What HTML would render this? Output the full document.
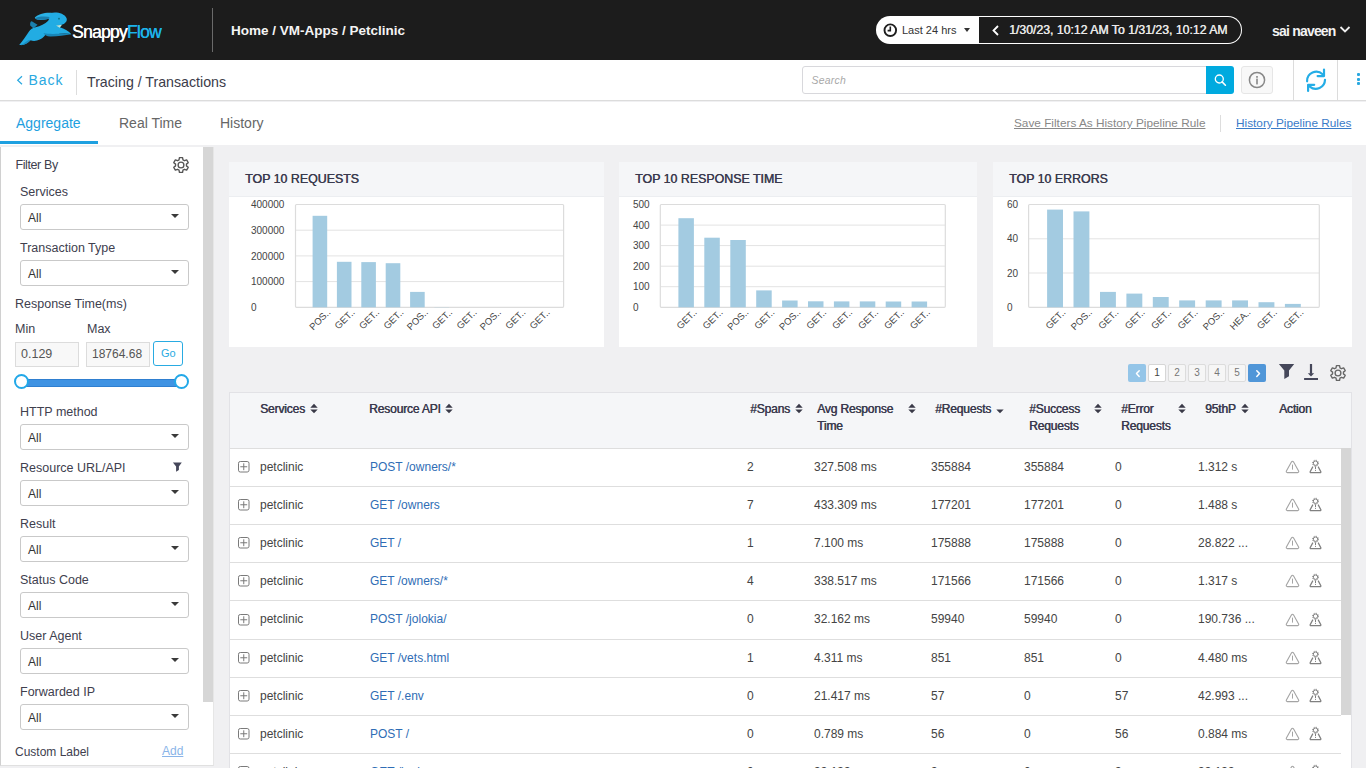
<!DOCTYPE html>
<html><head><meta charset="utf-8">
<style>
*{box-sizing:border-box;margin:0;padding:0}
html,body{width:1366px;height:768px;overflow:hidden;background:#f0f0f2;font-family:"Liberation Sans",sans-serif;color:#333}
.a{position:absolute;white-space:nowrap}
#hdr{position:absolute;left:0;top:0;width:1366px;height:60px;background:#1c1c1c}
#bar2{position:absolute;left:0;top:60px;width:1366px;height:41px;background:#fff;border-bottom:1px solid #dcdcdc}
#tabs{position:absolute;left:0;top:102px;width:1366px;height:43px;background:#fff}
.sel{position:absolute;left:20px;width:169px;height:26px;border:1px solid #c9c9c9;border-radius:3px;background:#fff}
.sel span{position:absolute;left:7px;top:6px;font-size:12px;color:#333}
.sel i{position:absolute;right:9.5px;top:8.8px;width:0;height:0;border-left:4.8px solid transparent;border-right:4.8px solid transparent;border-top:4.8px solid #3a3a3a}
.lbl{position:absolute;left:20px;font-size:12.5px;color:#40404e}
.panel{position:absolute;top:162px;height:185px;background:#fff}
.ph{position:absolute;left:0;top:0;right:0;height:35px;background:#f5f6f8;border-bottom:1px solid #eceef1}
.ph b{position:absolute;left:16px;top:9.8px;font-size:12.4px;color:#3a3a4e;font-weight:normal;text-shadow:0.4px 0 0 #3a3a4e;letter-spacing:0}
.th{font-size:12.1px;font-weight:normal;color:#3a3a4e;text-shadow:0.45px 0 0 #3a3a4e;line-height:16.9px;letter-spacing:-0.2px}
.td{font-size:12px;color:#444;line-height:14px}
</style></head><body>

<!-- HEADER -->
<div id="hdr">
  <svg class="a" style="left:15px;top:8px" width="60" height="40" viewBox="0 0 60 40">
    <path d="M15.2 17.5 C14.8 15 15.5 13.3 16.8 13.2 L22.5 16.8 L18.5 20.5 Z" fill="#1a7fae"/>
    <path d="M19.8 9.6 C23 6 30 4.3 36.5 4.8 L38.5 9 C33 11.5 26 12.6 22 11.6 C20.5 11.1 19.8 10.4 19.8 9.6 Z" fill="#2ab2e6"/>
    <path d="M20.6 9.9 C24 8.3 31 8 36.8 9.4 C33 11.3 27 12.3 23 11.7 C21.6 11.3 20.9 10.7 20.6 9.9 Z" fill="#1a7fae"/>
    <path d="M35 5.2 C41 3.6 49 5 51.6 10.2 C52.6 13.2 50 15.8 46 17 L42 17.6 L45.5 19.6 C50 21 53.5 23 56.4 26.2 C52 25.3 46 25.5 40 26.4 L30.5 26.8 C28.8 29.3 26 31.6 22 32.6 C19.5 33.2 17 33 15.6 32.2 C12.5 35 8.5 37.6 4.2 37 C7.5 33.5 10.5 28.5 14 23.5 C15.5 21.2 17.5 20 20.5 19.3 C25.5 18 30 16.2 33.2 12.8 C34.4 10.8 34.6 7.5 35 5.2 Z" fill="#22ace3"/>
    <path d="M28.5 25 C34 26.6 44 25.6 52 25.6 C54 25.7 55.6 25.9 56.4 26.2 C50 27.3 43 28.1 36 28.4 C32 28.6 29.8 27.6 28.5 25 Z" fill="#1886b8"/>
    <path d="M8 36 C11 34 13.5 31.5 15.6 32.2 C13 35 10 37 6 37.3 Z" fill="#1a8cc0"/>
    <path d="M41.2 17.4 L47 16.7 C46.2 18 45.3 19 44.6 19.8 Z" fill="#b8e8e0"/>
    <circle cx="44" cy="10.7" r="0.9" fill="#0d6e80"/>
  </svg>
  <div class="a" style="left:72px;top:22px;font-size:17.5px;color:#fff;letter-spacing:-0.75px;text-shadow:0.3px 0 0 currentColor">Snappy<span style="color:#1cb4ea">Flow</span></div>
  <div class="a" style="left:212px;top:8px;width:1px;height:44px;background:#6a6a6a"></div>
  <!-- time picker -->
  <div class="a" style="left:876px;top:16px;width:366px;height:28px;border-radius:14px;background:#fff"></div>
  <div class="a" style="left:979px;top:17px;width:262px;height:26px;border-radius:0 13px 13px 0;background:#1c1c1c"></div>
  <svg class="a" style="left:883px;top:23px" width="15" height="15" viewBox="0 0 15 15"><circle cx="7.3" cy="7.2" r="5.8" fill="none" stroke="#1e1e1e" stroke-width="1.9"/><path d="M7.3 3.6 V7.6 H4.6" fill="none" stroke="#1e1e1e" stroke-width="1.6"/></svg>
  <div class="a" style="left:902px;top:24px;font-size:11px;color:#333">Last 24 hrs</div>
  <div class="a" style="left:963.5px;top:28px;width:0;height:0;border-left:3.5px solid transparent;border-right:3.5px solid transparent;border-top:4px solid #333"></div>
  <svg class="a" style="left:990px;top:24px" width="12" height="13" viewBox="0 0 12 13"><path d="M8 2 L3.5 6.5 L8 11" fill="none" stroke="#fff" stroke-width="1.8"/></svg>
  <div class="a" style="left:1009px;top:23px;font-size:12.25px;color:#e8e8e8;text-shadow:0.4px 0 0 #e8e8e8">1/30/23, 10:12 AM To 1/31/23, 10:12 AM</div>
  <div class="a" style="left:1272px;top:23px;font-size:14px;font-weight:bold;color:#f2f2f2;letter-spacing:-0.8px">sai naveen</div>
  <svg class="a" style="left:1339px;top:25px" width="12" height="9" viewBox="0 0 12 9"><path d="M1.5 2 L6 6.5 L10.5 2" fill="none" stroke="#eee" stroke-width="1.8"/></svg>
  <div class="a" style="left:231px;top:22.5px;font-size:13.5px;font-weight:bold;color:#f4f4f4;letter-spacing:0px">Home / VM-Apps / Petclinic</div>
</div>

<!-- BAR 2 -->
<div id="bar2">
  <svg class="a" style="left:16px;top:15px" width="8" height="11" viewBox="0 0 8 11"><path d="M6 1.3 L1.7 5.3 L6 9.3" fill="none" stroke="#29a8e0" stroke-width="1.2"/></svg>
  <div class="a" style="left:28.5px;top:12px;font-size:14px;color:#29a8e0;letter-spacing:1px">Back</div>
  <div class="a" style="left:76px;top:10px;width:1px;height:25px;background:#ddd"></div>
  <div class="a" style="left:87px;top:14px;font-size:14.2px;color:#3c3c4a">Tracing / Transactions</div>
  <div class="a" style="left:802px;top:6px;width:405px;height:28px;border:1px solid #d8d8dc;border-radius:3px 0 0 3px;background:#fff"></div>
  <div class="a" style="left:811.5px;top:15.2px;font-size:10.4px;font-style:italic;color:#a8a8a8;letter-spacing:0.25px">Search</div>
  <div class="a" style="left:1206px;top:6px;width:28px;height:28px;background:#00aadf;border-radius:0 3px 3px 0"></div>
  <svg class="a" style="left:1212px;top:12px" width="16" height="16" viewBox="0 0 16 16"><circle cx="7.3" cy="7" r="4" fill="none" stroke="#fff" stroke-width="1.3"/><path d="M10.1 9.9 L13.4 13.2" stroke="#fff" stroke-width="1.6" stroke-linecap="round"/></svg>
  <div class="a" style="left:1241px;top:6px;width:32px;height:28px;background:#f8f8f8;border:1px solid #e6e6e6;border-radius:3px"></div>
  <svg class="a" style="left:1248px;top:11px" width="18" height="18" viewBox="0 0 18 18"><circle cx="9" cy="9" r="7.6" fill="none" stroke="#888" stroke-width="1.5"/><rect x="8.2" y="5" width="1.6" height="1.8" fill="#888"/><rect x="8.2" y="7.6" width="1.6" height="5.8" fill="#888"/></svg>
  <div class="a" style="left:1293px;top:0;width:1px;height:41px;background:#dcdcdc"></div>
  <svg class="a" style="left:1304px;top:8px" width="24" height="26" viewBox="0 0 24 26"><g fill="none" stroke="#24ade6" stroke-width="2.2" stroke-linecap="round" stroke-linejoin="round"><path d="M3.1 13.3 A9.2 9.2 0 0 1 18.6 6.3"/><path d="M20 1.6 V8.1 H13.6"/><path d="M21 11.8 A9.2 9.2 0 0 1 5.8 18.6"/><path d="M4.1 23 V16.8 H10.2"/></g></svg>
  <div class="a" style="left:1337px;top:0;width:1px;height:41px;background:#dcdcdc"></div>
  <div class="a" style="left:1357px;top:13px;width:3px;height:3px;background:#29a8e0;border-radius:1px"></div>
  <div class="a" style="left:1357px;top:17.5px;width:3px;height:3px;background:#29a8e0;border-radius:1px"></div>
  <div class="a" style="left:1357px;top:22px;width:3px;height:3px;background:#29a8e0;border-radius:1px"></div>
</div>

<!-- TABS -->
<div id="tabs">
  <div class="a" style="left:16px;top:13px;font-size:14px;color:#1ea0e0">Aggregate</div>
  <div class="a" style="left:0;top:39px;width:98px;height:3px;background:#1ea0e0"></div>
  <div class="a" style="left:119px;top:13px;font-size:14px;color:#666">Real Time</div>
  <div class="a" style="left:220px;top:13px;font-size:14px;color:#666">History</div>
  <div class="a" style="left:1014px;top:14px;font-size:11.8px;color:#888;text-decoration:underline">Save Filters As History Pipeline Rule</div>
  <div class="a" style="left:1220px;top:13px;width:1px;height:17px;background:#ddd"></div>
  <div class="a" style="left:1236px;top:14px;font-size:11.8px;color:#3a7bc8;text-decoration:underline">History Pipeline Rules</div>
</div>

<!-- SIDEBAR -->
<div class="a" style="left:0;top:147px;width:214px;height:619px;background:#fff;border-left:1px solid #d0d0d0;border-bottom:1px solid #e0e0e0;border-right:1px solid #e6e6e6"></div>
<div class="a" style="left:203px;top:147px;width:10px;height:555px;background:#d6d6d6"></div>
<div class="a" style="left:15.5px;top:158px;font-size:12.5px;letter-spacing:-0.4px;color:#40404e">Filter By</div>
<svg class="a" style="left:172px;top:156px" width="18" height="18" viewBox="0 0 18 18"><path fill="none" stroke="#555" stroke-width="1.35" stroke-linejoin="round" d="M10.97 3.87 L10.58 1.57 L7.42 1.57 L7.03 3.87 L5.54 4.73 L3.35 3.91 L1.77 6.65 L3.57 8.14 L3.57 9.86 L1.77 11.35 L3.35 14.09 L5.54 13.27 L7.03 14.13 L7.42 16.43 L10.58 16.43 L10.97 14.13 L12.46 13.27 L14.65 14.09 L16.23 11.35 L14.43 9.86 L14.43 8.14 L16.23 6.65 L14.65 3.91 L12.46 4.73 Z"/><circle cx="9" cy="9" r="2.9" fill="none" stroke="#555" stroke-width="1.35"/></svg>

<div class="lbl" style="top:185px">Services</div>
<div class="sel" style="top:204px"><span>All</span><i></i></div>
<div class="lbl" style="top:241px">Transaction Type</div>
<div class="sel" style="top:260px"><span>All</span><i></i></div>
<div class="lbl" style="top:297px;left:15px">Response Time(ms)</div>
<div class="lbl" style="top:322px;left:15px">Min</div>
<div class="lbl" style="top:322px;left:87px">Max</div>
<div class="a" style="left:15px;top:342px;width:64px;height:25px;background:#f8f8f8;border:1px solid #dcdcdc"></div>
<div class="a" style="left:21px;top:347px;font-size:12.5px;color:#555">0.129</div>
<div class="a" style="left:86px;top:342px;width:64px;height:25px;background:#f8f8f8;border:1px solid #dcdcdc"></div>
<div class="a" style="left:92px;top:346.8px;font-size:12px;color:#555">18764.68</div>
<div class="a" style="left:153px;top:341px;width:30px;height:25px;background:#fff;border:1px solid #29abe2;border-radius:3px"></div>
<div class="a" style="left:161px;top:347px;font-size:11px;color:#29abe2">Go</div>
<div class="a" style="left:21px;top:379px;width:160px;height:8px;background:#3f93e3;border-top:1px solid #2f7fd0;border-bottom:1px solid #2f7fd0"></div>
<div class="a" style="left:14px;top:374px;width:15px;height:15px;border-radius:50%;background:#fff;border:2.3px solid #22a8e8"></div>
<div class="a" style="left:174px;top:374px;width:15px;height:15px;border-radius:50%;background:#fff;border:2.3px solid #22a8e8"></div>

<div class="lbl" style="top:405px">HTTP method</div>
<div class="sel" style="top:424px"><span>All</span><i></i></div>
<div class="lbl" style="top:461px">Resource URL/API</div>
<svg class="a" style="left:172px;top:462px" width="11" height="11" viewBox="0 0 11 11"><path d="M0.9 0.4 H9.8 L6.9 4.4 V7.9 L4.1 9.8 V4.4 Z" fill="#45475a"/></svg>
<div class="sel" style="top:480px"><span>All</span><i></i></div>
<div class="lbl" style="top:517px">Result</div>
<div class="sel" style="top:536px"><span>All</span><i></i></div>
<div class="lbl" style="top:573px">Status Code</div>
<div class="sel" style="top:592px"><span>All</span><i></i></div>
<div class="lbl" style="top:629px">User Agent</div>
<div class="sel" style="top:648px"><span>All</span><i></i></div>
<div class="lbl" style="top:685px">Forwarded IP</div>
<div class="sel" style="top:704px"><span>All</span><i></i></div>
<div class="lbl" style="top:744.5px;left:15px;font-size:12px">Custom Label</div>
<div class="a" style="left:162px;top:744px;font-size:12px;color:#8ab4e8;text-decoration:underline">Add</div>

<!-- CHARTS -->
<div class="panel" style="left:229px;width:375px"><div class="ph"><b>TOP 10 REQUESTS</b></div></div>
<div class="panel" style="left:619px;width:358px"><div class="ph"><b>TOP 10 RESPONSE TIME</b></div></div>
<div class="panel" style="left:993px;width:359px"><div class="ph"><b>TOP 10 ERRORS</b></div></div>
<svg class="a" style="left:0;top:0" width="1366" height="360" viewBox="0 0 1366 360">
<text x="251" y="208.1" font-size="10" fill="#444">400000</text>
<line x1="295.5" y1="230.2" x2="563.6" y2="230.2" stroke="#e3e3e3" stroke-width="1"/>
<text x="251" y="233.8" font-size="10" fill="#444">300000</text>
<line x1="295.5" y1="255.9" x2="563.6" y2="255.9" stroke="#e3e3e3" stroke-width="1"/>
<text x="251" y="259.5" font-size="10" fill="#444">200000</text>
<line x1="295.5" y1="281.6" x2="563.6" y2="281.6" stroke="#e3e3e3" stroke-width="1"/>
<text x="251" y="285.2" font-size="10" fill="#444">100000</text>
<text x="251" y="310.9" font-size="10" fill="#444">0</text>
<rect x="295.5" y="204.5" width="268.1" height="102.80000000000001" fill="none" stroke="#dcdcdc" stroke-width="1.2" rx="1"/>
<rect x="312.6" y="215.8" width="14.6" height="91.5" fill="#a3cbe1"/>
<text x="331.1" y="312.9" font-size="9.5" fill="#444" text-anchor="end" transform="rotate(-45 331.1 312.9)">POS..</text>
<rect x="336.9" y="261.8" width="14.6" height="45.5" fill="#a3cbe1"/>
<text x="355.4" y="312.9" font-size="9.5" fill="#444" text-anchor="end" transform="rotate(-45 355.4 312.9)">GET..</text>
<rect x="361.3" y="262.1" width="14.6" height="45.2" fill="#a3cbe1"/>
<text x="379.8" y="312.9" font-size="9.5" fill="#444" text-anchor="end" transform="rotate(-45 379.8 312.9)">GET..</text>
<rect x="385.7" y="263.2" width="14.6" height="44.1" fill="#a3cbe1"/>
<text x="404.2" y="312.9" font-size="9.5" fill="#444" text-anchor="end" transform="rotate(-45 404.2 312.9)">GET..</text>
<rect x="410.1" y="291.9" width="14.6" height="15.4" fill="#a3cbe1"/>
<text x="428.6" y="312.9" font-size="9.5" fill="#444" text-anchor="end" transform="rotate(-45 428.6 312.9)">POS..</text>
<rect x="434.4" y="307.1" width="14.6" height="0.2" fill="#a3cbe1"/>
<text x="452.9" y="312.9" font-size="9.5" fill="#444" text-anchor="end" transform="rotate(-45 452.9 312.9)">GET..</text>
<rect x="458.8" y="307.3" width="14.6" height="0.0" fill="#a3cbe1"/>
<text x="477.3" y="312.9" font-size="9.5" fill="#444" text-anchor="end" transform="rotate(-45 477.3 312.9)">GET..</text>
<rect x="483.2" y="307.3" width="14.6" height="0.0" fill="#a3cbe1"/>
<text x="501.7" y="312.9" font-size="9.5" fill="#444" text-anchor="end" transform="rotate(-45 501.7 312.9)">POS..</text>
<rect x="507.5" y="307.3" width="14.6" height="0.0" fill="#a3cbe1"/>
<text x="526.1" y="312.9" font-size="9.5" fill="#444" text-anchor="end" transform="rotate(-45 526.1 312.9)">GET..</text>
<rect x="531.9" y="307.3" width="14.6" height="0.0" fill="#a3cbe1"/>
<text x="550.4" y="312.9" font-size="9.5" fill="#444" text-anchor="end" transform="rotate(-45 550.4 312.9)">GET..</text>

<text x="633" y="208.1" font-size="10" fill="#444">500</text>
<line x1="660.3" y1="225.1" x2="945.3" y2="225.1" stroke="#e3e3e3" stroke-width="1"/>
<text x="633" y="228.7" font-size="10" fill="#444">400</text>
<line x1="660.3" y1="245.6" x2="945.3" y2="245.6" stroke="#e3e3e3" stroke-width="1"/>
<text x="633" y="249.2" font-size="10" fill="#444">300</text>
<line x1="660.3" y1="266.2" x2="945.3" y2="266.2" stroke="#e3e3e3" stroke-width="1"/>
<text x="633" y="269.8" font-size="10" fill="#444">200</text>
<line x1="660.3" y1="286.7" x2="945.3" y2="286.7" stroke="#e3e3e3" stroke-width="1"/>
<text x="633" y="290.3" font-size="10" fill="#444">100</text>
<text x="633" y="310.9" font-size="10" fill="#444">0</text>
<rect x="660.3" y="204.5" width="285.0" height="102.80000000000001" fill="none" stroke="#dcdcdc" stroke-width="1.2" rx="1"/>
<rect x="678.4" y="218.2" width="15.5" height="89.1" fill="#a3cbe1"/>
<text x="697.4" y="312.9" font-size="9.5" fill="#444" text-anchor="end" transform="rotate(-45 697.4 312.9)">GET..</text>
<rect x="704.3" y="237.7" width="15.5" height="69.6" fill="#a3cbe1"/>
<text x="723.3" y="312.9" font-size="9.5" fill="#444" text-anchor="end" transform="rotate(-45 723.3 312.9)">GET..</text>
<rect x="730.3" y="240.0" width="15.5" height="67.3" fill="#a3cbe1"/>
<text x="749.2" y="312.9" font-size="9.5" fill="#444" text-anchor="end" transform="rotate(-45 749.2 312.9)">POS..</text>
<rect x="756.2" y="290.4" width="15.5" height="16.9" fill="#a3cbe1"/>
<text x="775.1" y="312.9" font-size="9.5" fill="#444" text-anchor="end" transform="rotate(-45 775.1 312.9)">GET..</text>
<rect x="782.1" y="300.5" width="15.5" height="6.8" fill="#a3cbe1"/>
<text x="801.0" y="312.9" font-size="9.5" fill="#444" text-anchor="end" transform="rotate(-45 801.0 312.9)">POS..</text>
<rect x="808.0" y="301.3" width="15.5" height="6.0" fill="#a3cbe1"/>
<text x="827.0" y="312.9" font-size="9.5" fill="#444" text-anchor="end" transform="rotate(-45 827.0 312.9)">GET..</text>
<rect x="833.9" y="301.4" width="15.5" height="5.9" fill="#a3cbe1"/>
<text x="852.9" y="312.9" font-size="9.5" fill="#444" text-anchor="end" transform="rotate(-45 852.9 312.9)">GET..</text>
<rect x="859.8" y="301.4" width="15.5" height="5.9" fill="#a3cbe1"/>
<text x="878.8" y="312.9" font-size="9.5" fill="#444" text-anchor="end" transform="rotate(-45 878.8 312.9)">GET..</text>
<rect x="885.7" y="301.5" width="15.5" height="5.8" fill="#a3cbe1"/>
<text x="904.7" y="312.9" font-size="9.5" fill="#444" text-anchor="end" transform="rotate(-45 904.7 312.9)">GET..</text>
<rect x="911.6" y="301.5" width="15.5" height="5.8" fill="#a3cbe1"/>
<text x="930.6" y="312.9" font-size="9.5" fill="#444" text-anchor="end" transform="rotate(-45 930.6 312.9)">GET..</text>

<text x="1007" y="208.1" font-size="10" fill="#444">60</text>
<line x1="1028.6" y1="238.8" x2="1319.3" y2="238.8" stroke="#e3e3e3" stroke-width="1"/>
<text x="1007" y="242.4" font-size="10" fill="#444">40</text>
<line x1="1028.6" y1="273.0" x2="1319.3" y2="273.0" stroke="#e3e3e3" stroke-width="1"/>
<text x="1007" y="276.6" font-size="10" fill="#444">20</text>
<text x="1007" y="310.9" font-size="10" fill="#444">0</text>
<rect x="1028.6" y="204.5" width="290.70000000000005" height="102.80000000000001" fill="none" stroke="#dcdcdc" stroke-width="1.2" rx="1"/>
<rect x="1047.1" y="209.6" width="15.9" height="97.7" fill="#a3cbe1"/>
<text x="1066.2" y="312.9" font-size="9.5" fill="#444" text-anchor="end" transform="rotate(-45 1066.2 312.9)">GET..</text>
<rect x="1073.5" y="211.4" width="15.9" height="95.9" fill="#a3cbe1"/>
<text x="1092.7" y="312.9" font-size="9.5" fill="#444" text-anchor="end" transform="rotate(-45 1092.7 312.9)">POS..</text>
<rect x="1100.0" y="291.9" width="15.9" height="15.4" fill="#a3cbe1"/>
<text x="1119.1" y="312.9" font-size="9.5" fill="#444" text-anchor="end" transform="rotate(-45 1119.1 312.9)">GET..</text>
<rect x="1126.4" y="293.6" width="15.9" height="13.7" fill="#a3cbe1"/>
<text x="1145.5" y="312.9" font-size="9.5" fill="#444" text-anchor="end" transform="rotate(-45 1145.5 312.9)">GET..</text>
<rect x="1152.8" y="297.0" width="15.9" height="10.3" fill="#a3cbe1"/>
<text x="1171.9" y="312.9" font-size="9.5" fill="#444" text-anchor="end" transform="rotate(-45 1171.9 312.9)">GET..</text>
<rect x="1179.2" y="300.4" width="15.9" height="6.9" fill="#a3cbe1"/>
<text x="1198.4" y="312.9" font-size="9.5" fill="#444" text-anchor="end" transform="rotate(-45 1198.4 312.9)">GET..</text>
<rect x="1205.7" y="300.4" width="15.9" height="6.9" fill="#a3cbe1"/>
<text x="1224.8" y="312.9" font-size="9.5" fill="#444" text-anchor="end" transform="rotate(-45 1224.8 312.9)">POS..</text>
<rect x="1232.1" y="300.4" width="15.9" height="6.9" fill="#a3cbe1"/>
<text x="1251.2" y="312.9" font-size="9.5" fill="#444" text-anchor="end" transform="rotate(-45 1251.2 312.9)">HEA..</text>
<rect x="1258.5" y="302.2" width="15.9" height="5.1" fill="#a3cbe1"/>
<text x="1277.6" y="312.9" font-size="9.5" fill="#444" text-anchor="end" transform="rotate(-45 1277.6 312.9)">GET..</text>
<rect x="1284.9" y="303.9" width="15.9" height="3.4" fill="#a3cbe1"/>
<text x="1304.1" y="312.9" font-size="9.5" fill="#444" text-anchor="end" transform="rotate(-45 1304.1 312.9)">GET..</text>
</svg>
<!-- /CHARTS -->
<!-- TABLE -->
<div class="a" style="left:1128px;top:364px;width:18px;height:18px;background:#94c5e8;border-radius:2px"><svg style="position:absolute;left:4.5px;top:0.5px" width="10" height="17" viewBox="0 0 10 17"><path d="M6.2 5.8 L3.5 8.6 L6.2 11.4" fill="none" stroke="#fff" stroke-width="1.5" stroke-linecap="round" stroke-linejoin="round"/></svg></div>
<div class="a" style="left:1148px;top:364px;width:18px;height:18px;background:#fff;border:1px solid #d6d6d6;border-radius:2px;font-size:10px;color:#444;text-align:center;line-height:16px">1</div>
<div class="a" style="left:1168px;top:364px;width:18px;height:18px;background:#f6f6f6;border:1px solid #dcdcdc;border-radius:2px;font-size:10px;color:#777;text-align:center;line-height:16px">2</div>
<div class="a" style="left:1188px;top:364px;width:18px;height:18px;background:#f6f6f6;border:1px solid #dcdcdc;border-radius:2px;font-size:10px;color:#777;text-align:center;line-height:16px">3</div>
<div class="a" style="left:1208px;top:364px;width:18px;height:18px;background:#f6f6f6;border:1px solid #dcdcdc;border-radius:2px;font-size:10px;color:#777;text-align:center;line-height:16px">4</div>
<div class="a" style="left:1228px;top:364px;width:18px;height:18px;background:#f6f6f6;border:1px solid #dcdcdc;border-radius:2px;font-size:10px;color:#777;text-align:center;line-height:16px">5</div>
<div class="a" style="left:1248px;top:364px;width:18px;height:18px;background:#5096d8;border-radius:2px"><svg style="position:absolute;left:4.5px;top:0.5px" width="10" height="17" viewBox="0 0 10 17"><path d="M3.8 5.8 L6.5 8.6 L3.8 11.4" fill="none" stroke="#fff" stroke-width="1.5" stroke-linecap="round" stroke-linejoin="round"/></svg></div>
<svg class="a" style="left:1278px;top:363px" width="17" height="17" viewBox="0 0 17 17"><path d="M0.9 0.9 H16.2 L11 7.6 V13.2 L6.3 16 V7.6 Z" fill="#45475a"/></svg>
<svg class="a" style="left:1302px;top:363px" width="17" height="18" viewBox="0 0 17 18"><rect x="7.9" y="1" width="2.2" height="9.8" fill="#45475a"/><path d="M5.8 10.2 H12.2 L9 13.4 Z" fill="#45475a"/><rect x="2.1" y="15" width="13.9" height="2" fill="#45475a"/></svg>
<svg class="a" style="left:1329px;top:364px" width="18" height="18" viewBox="0 0 18 18"><path fill="none" stroke="#666" stroke-width="1.35" stroke-linejoin="round" d="M10.97 3.87 L10.58 1.57 L7.42 1.57 L7.03 3.87 L5.54 4.73 L3.35 3.91 L1.77 6.65 L3.57 8.14 L3.57 9.86 L1.77 11.35 L3.35 14.09 L5.54 13.27 L7.03 14.13 L7.42 16.43 L10.58 16.43 L10.97 14.13 L12.46 13.27 L14.65 14.09 L16.23 11.35 L14.43 9.86 L14.43 8.14 L16.23 6.65 L14.65 3.91 L12.46 4.73 Z"/><circle cx="9" cy="9" r="2.9" fill="none" stroke="#666" stroke-width="1.35"/></svg>
<div class="a" style="left:229px;top:392px;width:1123px;height:380px;background:#fff;border:1px solid #e2e2e6"></div>
<div class="a" style="left:230px;top:393px;width:1121px;height:56px;background:#f5f6f8;border-bottom:1px solid #dedede"></div>
<div class="a th" style="left:260px;top:400.6px">Services</div>
<svg class="a" style="left:310px;top:403px" width="8" height="11" viewBox="0 0 8 11"><path d="M0.3 4.8 L4 0.8 L7.7 4.8 Z M0.3 6.4 L4 10.2 L7.7 6.4 Z" fill="#3a3a48"/></svg>
<div class="a th" style="left:369px;top:400.6px">Resource API</div>
<svg class="a" style="left:445px;top:403px" width="8" height="11" viewBox="0 0 8 11"><path d="M0.3 4.8 L4 0.8 L7.7 4.8 Z M0.3 6.4 L4 10.2 L7.7 6.4 Z" fill="#3a3a48"/></svg>
<div class="a th" style="left:750px;top:400.6px">#Spans</div>
<svg class="a" style="left:794.5px;top:403px" width="8" height="11" viewBox="0 0 8 11"><path d="M0.3 4.8 L4 0.8 L7.7 4.8 Z M0.3 6.4 L4 10.2 L7.7 6.4 Z" fill="#3a3a48"/></svg>
<div class="a th" style="left:817px;top:400.6px">Avg Response<br>Time</div>
<svg class="a" style="left:908px;top:403px" width="8" height="11" viewBox="0 0 8 11"><path d="M0.3 4.8 L4 0.8 L7.7 4.8 Z M0.3 6.4 L4 10.2 L7.7 6.4 Z" fill="#3a3a48"/></svg>
<div class="a th" style="left:935px;top:400.6px">#Requests</div>
<svg class="a" style="left:996px;top:403px" width="8" height="11" viewBox="0 0 8 11"><path d="M0.3 6.6 L4 10.2 L7.7 6.6 Z" fill="#3a3a48"/></svg>
<div class="a th" style="left:1029px;top:400.6px">#Success<br>Requests</div>
<svg class="a" style="left:1094px;top:403px" width="8" height="11" viewBox="0 0 8 11"><path d="M0.3 4.8 L4 0.8 L7.7 4.8 Z M0.3 6.4 L4 10.2 L7.7 6.4 Z" fill="#3a3a48"/></svg>
<div class="a th" style="left:1121px;top:400.6px">#Error<br>Requests</div>
<svg class="a" style="left:1178px;top:403px" width="8" height="11" viewBox="0 0 8 11"><path d="M0.3 4.8 L4 0.8 L7.7 4.8 Z M0.3 6.4 L4 10.2 L7.7 6.4 Z" fill="#3a3a48"/></svg>
<div class="a th" style="left:1205px;top:400.6px">95thP</div>
<svg class="a" style="left:1240.5px;top:403px" width="8" height="11" viewBox="0 0 8 11"><path d="M0.3 4.8 L4 0.8 L7.7 4.8 Z M0.3 6.4 L4 10.2 L7.7 6.4 Z" fill="#3a3a48"/></svg>
<div class="a th" style="left:1279px;top:400.6px">Action</div>
<div class="a" style="left:1341px;top:448px;width:10px;height:267px;background:#d6d6d6"></div>
<div class="a" style="left:230px;top:486.00px;width:1111px;height:1px;background:#dedede"></div>
<svg class="a" style="left:238px;top:461.00px" width="12" height="12" viewBox="0 0 12 12"><rect x="0.5" y="0.5" width="10.5" height="10.5" rx="1.8" fill="none" stroke="#7a7a7a" stroke-width="1"/><path d="M2.3 5.75 H9.2 M5.75 2.3 V9.2" stroke="#7a7a7a" stroke-width="1"/></svg>
<div class="a td" style="left:260px;top:459.8px">petclinic</div>
<div class="a td" style="left:370px;top:459.8px;color:#2f6db5">POST /owners/*</div>
<div class="a td" style="left:747px;top:459.8px">2</div>
<div class="a td" style="left:814px;top:459.8px">327.508 ms</div>
<div class="a td" style="left:931px;top:459.8px">355884</div>
<div class="a td" style="left:1024px;top:459.8px">355884</div>
<div class="a td" style="left:1115px;top:459.8px">0</div>
<div class="a td" style="left:1198px;top:459.8px">1.312 s</div>
<svg class="a" style="left:1285px;top:460.00px" width="15" height="14" viewBox="0 0 15 14"><path d="M7.5 1.3 C8 1.3 8.3 1.6 8.6 2.1 L13.6 11 C14 11.8 13.6 12.6 12.7 12.6 H2.3 C1.4 12.6 1 11.8 1.4 11 L6.4 2.1 C6.7 1.6 7 1.3 7.5 1.3 Z" fill="none" stroke="#a4a4a4" stroke-width="1.1"/><path d="M7.5 4.6 V9.6" stroke="#a4a4a4" stroke-width="1"/></svg>
<svg class="a" style="left:1309px;top:459.00px" width="13" height="15" viewBox="0 0 13 15"><circle cx="6.5" cy="4.2" r="2.2" fill="none" stroke="#808080" stroke-width="1"/><circle cx="6.5" cy="4.2" r="3" fill="none" stroke="#808080" stroke-width="1" stroke-dasharray="1.1 1.25"/><path d="M3.9 7.6 L1.2 12.6 C0.9 13.2 1.2 13.6 1.9 13.6 H11.1 C11.8 13.6 12.1 13.2 11.8 12.6 L9.1 7.6" fill="none" stroke="#808080" stroke-width="1.2" stroke-linejoin="round"/><path d="M6.5 7.4 V10.2 M6.5 11.1 V12" stroke="#808080" stroke-width="1"/></svg>
<div class="a" style="left:230px;top:524.14px;width:1111px;height:1px;background:#dedede"></div>
<svg class="a" style="left:238px;top:499.14px" width="12" height="12" viewBox="0 0 12 12"><rect x="0.5" y="0.5" width="10.5" height="10.5" rx="1.8" fill="none" stroke="#7a7a7a" stroke-width="1"/><path d="M2.3 5.75 H9.2 M5.75 2.3 V9.2" stroke="#7a7a7a" stroke-width="1"/></svg>
<div class="a td" style="left:260px;top:497.94px">petclinic</div>
<div class="a td" style="left:370px;top:497.94px;color:#2f6db5">GET /owners</div>
<div class="a td" style="left:747px;top:497.94px">7</div>
<div class="a td" style="left:814px;top:497.94px">433.309 ms</div>
<div class="a td" style="left:931px;top:497.94px">177201</div>
<div class="a td" style="left:1024px;top:497.94px">177201</div>
<div class="a td" style="left:1115px;top:497.94px">0</div>
<div class="a td" style="left:1198px;top:497.94px">1.488 s</div>
<svg class="a" style="left:1285px;top:498.14px" width="15" height="14" viewBox="0 0 15 14"><path d="M7.5 1.3 C8 1.3 8.3 1.6 8.6 2.1 L13.6 11 C14 11.8 13.6 12.6 12.7 12.6 H2.3 C1.4 12.6 1 11.8 1.4 11 L6.4 2.1 C6.7 1.6 7 1.3 7.5 1.3 Z" fill="none" stroke="#a4a4a4" stroke-width="1.1"/><path d="M7.5 4.6 V9.6" stroke="#a4a4a4" stroke-width="1"/></svg>
<svg class="a" style="left:1309px;top:497.14px" width="13" height="15" viewBox="0 0 13 15"><circle cx="6.5" cy="4.2" r="2.2" fill="none" stroke="#808080" stroke-width="1"/><circle cx="6.5" cy="4.2" r="3" fill="none" stroke="#808080" stroke-width="1" stroke-dasharray="1.1 1.25"/><path d="M3.9 7.6 L1.2 12.6 C0.9 13.2 1.2 13.6 1.9 13.6 H11.1 C11.8 13.6 12.1 13.2 11.8 12.6 L9.1 7.6" fill="none" stroke="#808080" stroke-width="1.2" stroke-linejoin="round"/><path d="M6.5 7.4 V10.2 M6.5 11.1 V12" stroke="#808080" stroke-width="1"/></svg>
<div class="a" style="left:230px;top:562.28px;width:1111px;height:1px;background:#dedede"></div>
<svg class="a" style="left:238px;top:537.28px" width="12" height="12" viewBox="0 0 12 12"><rect x="0.5" y="0.5" width="10.5" height="10.5" rx="1.8" fill="none" stroke="#7a7a7a" stroke-width="1"/><path d="M2.3 5.75 H9.2 M5.75 2.3 V9.2" stroke="#7a7a7a" stroke-width="1"/></svg>
<div class="a td" style="left:260px;top:536.08px">petclinic</div>
<div class="a td" style="left:370px;top:536.08px;color:#2f6db5">GET /</div>
<div class="a td" style="left:747px;top:536.08px">1</div>
<div class="a td" style="left:814px;top:536.08px">7.100 ms</div>
<div class="a td" style="left:931px;top:536.08px">175888</div>
<div class="a td" style="left:1024px;top:536.08px">175888</div>
<div class="a td" style="left:1115px;top:536.08px">0</div>
<div class="a td" style="left:1198px;top:536.08px">28.822 ...</div>
<svg class="a" style="left:1285px;top:536.28px" width="15" height="14" viewBox="0 0 15 14"><path d="M7.5 1.3 C8 1.3 8.3 1.6 8.6 2.1 L13.6 11 C14 11.8 13.6 12.6 12.7 12.6 H2.3 C1.4 12.6 1 11.8 1.4 11 L6.4 2.1 C6.7 1.6 7 1.3 7.5 1.3 Z" fill="none" stroke="#a4a4a4" stroke-width="1.1"/><path d="M7.5 4.6 V9.6" stroke="#a4a4a4" stroke-width="1"/></svg>
<svg class="a" style="left:1309px;top:535.28px" width="13" height="15" viewBox="0 0 13 15"><circle cx="6.5" cy="4.2" r="2.2" fill="none" stroke="#808080" stroke-width="1"/><circle cx="6.5" cy="4.2" r="3" fill="none" stroke="#808080" stroke-width="1" stroke-dasharray="1.1 1.25"/><path d="M3.9 7.6 L1.2 12.6 C0.9 13.2 1.2 13.6 1.9 13.6 H11.1 C11.8 13.6 12.1 13.2 11.8 12.6 L9.1 7.6" fill="none" stroke="#808080" stroke-width="1.2" stroke-linejoin="round"/><path d="M6.5 7.4 V10.2 M6.5 11.1 V12" stroke="#808080" stroke-width="1"/></svg>
<div class="a" style="left:230px;top:600.42px;width:1111px;height:1px;background:#dedede"></div>
<svg class="a" style="left:238px;top:575.42px" width="12" height="12" viewBox="0 0 12 12"><rect x="0.5" y="0.5" width="10.5" height="10.5" rx="1.8" fill="none" stroke="#7a7a7a" stroke-width="1"/><path d="M2.3 5.75 H9.2 M5.75 2.3 V9.2" stroke="#7a7a7a" stroke-width="1"/></svg>
<div class="a td" style="left:260px;top:574.22px">petclinic</div>
<div class="a td" style="left:370px;top:574.22px;color:#2f6db5">GET /owners/*</div>
<div class="a td" style="left:747px;top:574.22px">4</div>
<div class="a td" style="left:814px;top:574.22px">338.517 ms</div>
<div class="a td" style="left:931px;top:574.22px">171566</div>
<div class="a td" style="left:1024px;top:574.22px">171566</div>
<div class="a td" style="left:1115px;top:574.22px">0</div>
<div class="a td" style="left:1198px;top:574.22px">1.317 s</div>
<svg class="a" style="left:1285px;top:574.42px" width="15" height="14" viewBox="0 0 15 14"><path d="M7.5 1.3 C8 1.3 8.3 1.6 8.6 2.1 L13.6 11 C14 11.8 13.6 12.6 12.7 12.6 H2.3 C1.4 12.6 1 11.8 1.4 11 L6.4 2.1 C6.7 1.6 7 1.3 7.5 1.3 Z" fill="none" stroke="#a4a4a4" stroke-width="1.1"/><path d="M7.5 4.6 V9.6" stroke="#a4a4a4" stroke-width="1"/></svg>
<svg class="a" style="left:1309px;top:573.42px" width="13" height="15" viewBox="0 0 13 15"><circle cx="6.5" cy="4.2" r="2.2" fill="none" stroke="#808080" stroke-width="1"/><circle cx="6.5" cy="4.2" r="3" fill="none" stroke="#808080" stroke-width="1" stroke-dasharray="1.1 1.25"/><path d="M3.9 7.6 L1.2 12.6 C0.9 13.2 1.2 13.6 1.9 13.6 H11.1 C11.8 13.6 12.1 13.2 11.8 12.6 L9.1 7.6" fill="none" stroke="#808080" stroke-width="1.2" stroke-linejoin="round"/><path d="M6.5 7.4 V10.2 M6.5 11.1 V12" stroke="#808080" stroke-width="1"/></svg>
<div class="a" style="left:230px;top:638.56px;width:1111px;height:1px;background:#dedede"></div>
<svg class="a" style="left:238px;top:613.56px" width="12" height="12" viewBox="0 0 12 12"><rect x="0.5" y="0.5" width="10.5" height="10.5" rx="1.8" fill="none" stroke="#7a7a7a" stroke-width="1"/><path d="M2.3 5.75 H9.2 M5.75 2.3 V9.2" stroke="#7a7a7a" stroke-width="1"/></svg>
<div class="a td" style="left:260px;top:612.36px">petclinic</div>
<div class="a td" style="left:370px;top:612.36px;color:#2f6db5">POST /jolokia/</div>
<div class="a td" style="left:747px;top:612.36px">0</div>
<div class="a td" style="left:814px;top:612.36px">32.162 ms</div>
<div class="a td" style="left:931px;top:612.36px">59940</div>
<div class="a td" style="left:1024px;top:612.36px">59940</div>
<div class="a td" style="left:1115px;top:612.36px">0</div>
<div class="a td" style="left:1198px;top:612.36px">190.736 ...</div>
<svg class="a" style="left:1285px;top:612.56px" width="15" height="14" viewBox="0 0 15 14"><path d="M7.5 1.3 C8 1.3 8.3 1.6 8.6 2.1 L13.6 11 C14 11.8 13.6 12.6 12.7 12.6 H2.3 C1.4 12.6 1 11.8 1.4 11 L6.4 2.1 C6.7 1.6 7 1.3 7.5 1.3 Z" fill="none" stroke="#a4a4a4" stroke-width="1.1"/><path d="M7.5 4.6 V9.6" stroke="#a4a4a4" stroke-width="1"/></svg>
<svg class="a" style="left:1309px;top:611.56px" width="13" height="15" viewBox="0 0 13 15"><circle cx="6.5" cy="4.2" r="2.2" fill="none" stroke="#808080" stroke-width="1"/><circle cx="6.5" cy="4.2" r="3" fill="none" stroke="#808080" stroke-width="1" stroke-dasharray="1.1 1.25"/><path d="M3.9 7.6 L1.2 12.6 C0.9 13.2 1.2 13.6 1.9 13.6 H11.1 C11.8 13.6 12.1 13.2 11.8 12.6 L9.1 7.6" fill="none" stroke="#808080" stroke-width="1.2" stroke-linejoin="round"/><path d="M6.5 7.4 V10.2 M6.5 11.1 V12" stroke="#808080" stroke-width="1"/></svg>
<div class="a" style="left:230px;top:676.70px;width:1111px;height:1px;background:#dedede"></div>
<svg class="a" style="left:238px;top:651.70px" width="12" height="12" viewBox="0 0 12 12"><rect x="0.5" y="0.5" width="10.5" height="10.5" rx="1.8" fill="none" stroke="#7a7a7a" stroke-width="1"/><path d="M2.3 5.75 H9.2 M5.75 2.3 V9.2" stroke="#7a7a7a" stroke-width="1"/></svg>
<div class="a td" style="left:260px;top:650.5px">petclinic</div>
<div class="a td" style="left:370px;top:650.5px;color:#2f6db5">GET /vets.html</div>
<div class="a td" style="left:747px;top:650.5px">1</div>
<div class="a td" style="left:814px;top:650.5px">4.311 ms</div>
<div class="a td" style="left:931px;top:650.5px">851</div>
<div class="a td" style="left:1024px;top:650.5px">851</div>
<div class="a td" style="left:1115px;top:650.5px">0</div>
<div class="a td" style="left:1198px;top:650.5px">4.480 ms</div>
<svg class="a" style="left:1285px;top:650.70px" width="15" height="14" viewBox="0 0 15 14"><path d="M7.5 1.3 C8 1.3 8.3 1.6 8.6 2.1 L13.6 11 C14 11.8 13.6 12.6 12.7 12.6 H2.3 C1.4 12.6 1 11.8 1.4 11 L6.4 2.1 C6.7 1.6 7 1.3 7.5 1.3 Z" fill="none" stroke="#a4a4a4" stroke-width="1.1"/><path d="M7.5 4.6 V9.6" stroke="#a4a4a4" stroke-width="1"/></svg>
<svg class="a" style="left:1309px;top:649.70px" width="13" height="15" viewBox="0 0 13 15"><circle cx="6.5" cy="4.2" r="2.2" fill="none" stroke="#808080" stroke-width="1"/><circle cx="6.5" cy="4.2" r="3" fill="none" stroke="#808080" stroke-width="1" stroke-dasharray="1.1 1.25"/><path d="M3.9 7.6 L1.2 12.6 C0.9 13.2 1.2 13.6 1.9 13.6 H11.1 C11.8 13.6 12.1 13.2 11.8 12.6 L9.1 7.6" fill="none" stroke="#808080" stroke-width="1.2" stroke-linejoin="round"/><path d="M6.5 7.4 V10.2 M6.5 11.1 V12" stroke="#808080" stroke-width="1"/></svg>
<div class="a" style="left:230px;top:714.84px;width:1111px;height:1px;background:#dedede"></div>
<svg class="a" style="left:238px;top:689.84px" width="12" height="12" viewBox="0 0 12 12"><rect x="0.5" y="0.5" width="10.5" height="10.5" rx="1.8" fill="none" stroke="#7a7a7a" stroke-width="1"/><path d="M2.3 5.75 H9.2 M5.75 2.3 V9.2" stroke="#7a7a7a" stroke-width="1"/></svg>
<div class="a td" style="left:260px;top:688.64px">petclinic</div>
<div class="a td" style="left:370px;top:688.64px;color:#2f6db5">GET /.env</div>
<div class="a td" style="left:747px;top:688.64px">0</div>
<div class="a td" style="left:814px;top:688.64px">21.417 ms</div>
<div class="a td" style="left:931px;top:688.64px">57</div>
<div class="a td" style="left:1024px;top:688.64px">0</div>
<div class="a td" style="left:1115px;top:688.64px">57</div>
<div class="a td" style="left:1198px;top:688.64px">42.993 ...</div>
<svg class="a" style="left:1285px;top:688.84px" width="15" height="14" viewBox="0 0 15 14"><path d="M7.5 1.3 C8 1.3 8.3 1.6 8.6 2.1 L13.6 11 C14 11.8 13.6 12.6 12.7 12.6 H2.3 C1.4 12.6 1 11.8 1.4 11 L6.4 2.1 C6.7 1.6 7 1.3 7.5 1.3 Z" fill="none" stroke="#a4a4a4" stroke-width="1.1"/><path d="M7.5 4.6 V9.6" stroke="#a4a4a4" stroke-width="1"/></svg>
<svg class="a" style="left:1309px;top:687.84px" width="13" height="15" viewBox="0 0 13 15"><circle cx="6.5" cy="4.2" r="2.2" fill="none" stroke="#808080" stroke-width="1"/><circle cx="6.5" cy="4.2" r="3" fill="none" stroke="#808080" stroke-width="1" stroke-dasharray="1.1 1.25"/><path d="M3.9 7.6 L1.2 12.6 C0.9 13.2 1.2 13.6 1.9 13.6 H11.1 C11.8 13.6 12.1 13.2 11.8 12.6 L9.1 7.6" fill="none" stroke="#808080" stroke-width="1.2" stroke-linejoin="round"/><path d="M6.5 7.4 V10.2 M6.5 11.1 V12" stroke="#808080" stroke-width="1"/></svg>
<div class="a" style="left:230px;top:752.98px;width:1111px;height:1px;background:#dedede"></div>
<svg class="a" style="left:238px;top:727.98px" width="12" height="12" viewBox="0 0 12 12"><rect x="0.5" y="0.5" width="10.5" height="10.5" rx="1.8" fill="none" stroke="#7a7a7a" stroke-width="1"/><path d="M2.3 5.75 H9.2 M5.75 2.3 V9.2" stroke="#7a7a7a" stroke-width="1"/></svg>
<div class="a td" style="left:260px;top:726.78px">petclinic</div>
<div class="a td" style="left:370px;top:726.78px;color:#2f6db5">POST /</div>
<div class="a td" style="left:747px;top:726.78px">0</div>
<div class="a td" style="left:814px;top:726.78px">0.789 ms</div>
<div class="a td" style="left:931px;top:726.78px">56</div>
<div class="a td" style="left:1024px;top:726.78px">0</div>
<div class="a td" style="left:1115px;top:726.78px">56</div>
<div class="a td" style="left:1198px;top:726.78px">0.884 ms</div>
<svg class="a" style="left:1285px;top:726.98px" width="15" height="14" viewBox="0 0 15 14"><path d="M7.5 1.3 C8 1.3 8.3 1.6 8.6 2.1 L13.6 11 C14 11.8 13.6 12.6 12.7 12.6 H2.3 C1.4 12.6 1 11.8 1.4 11 L6.4 2.1 C6.7 1.6 7 1.3 7.5 1.3 Z" fill="none" stroke="#a4a4a4" stroke-width="1.1"/><path d="M7.5 4.6 V9.6" stroke="#a4a4a4" stroke-width="1"/></svg>
<svg class="a" style="left:1309px;top:725.98px" width="13" height="15" viewBox="0 0 13 15"><circle cx="6.5" cy="4.2" r="2.2" fill="none" stroke="#808080" stroke-width="1"/><circle cx="6.5" cy="4.2" r="3" fill="none" stroke="#808080" stroke-width="1" stroke-dasharray="1.1 1.25"/><path d="M3.9 7.6 L1.2 12.6 C0.9 13.2 1.2 13.6 1.9 13.6 H11.1 C11.8 13.6 12.1 13.2 11.8 12.6 L9.1 7.6" fill="none" stroke="#808080" stroke-width="1.2" stroke-linejoin="round"/><path d="M6.5 7.4 V10.2 M6.5 11.1 V12" stroke="#808080" stroke-width="1"/></svg>
<div class="a" style="left:230px;top:791.12px;width:1111px;height:1px;background:#dedede"></div>
<svg class="a" style="left:238px;top:766.12px" width="12" height="12" viewBox="0 0 12 12"><rect x="0.5" y="0.5" width="10.5" height="10.5" rx="1.8" fill="none" stroke="#7a7a7a" stroke-width="1"/><path d="M2.3 5.75 H9.2 M5.75 2.3 V9.2" stroke="#7a7a7a" stroke-width="1"/></svg>
<div class="a td" style="left:260px;top:764.92px">petclinic</div>
<div class="a td" style="left:370px;top:764.92px;color:#2f6db5">GET /login</div>
<div class="a td" style="left:747px;top:764.92px">0</div>
<div class="a td" style="left:814px;top:764.92px">33.133 ms</div>
<div class="a td" style="left:931px;top:764.92px">3</div>
<div class="a td" style="left:1024px;top:764.92px">0</div>
<div class="a td" style="left:1115px;top:764.92px">3</div>
<div class="a td" style="left:1198px;top:764.92px">33.133 ms</div>
<svg class="a" style="left:1285px;top:765.12px" width="15" height="14" viewBox="0 0 15 14"><path d="M7.5 1.3 C8 1.3 8.3 1.6 8.6 2.1 L13.6 11 C14 11.8 13.6 12.6 12.7 12.6 H2.3 C1.4 12.6 1 11.8 1.4 11 L6.4 2.1 C6.7 1.6 7 1.3 7.5 1.3 Z" fill="none" stroke="#a4a4a4" stroke-width="1.1"/><path d="M7.5 4.6 V9.6" stroke="#a4a4a4" stroke-width="1"/></svg>
<svg class="a" style="left:1309px;top:764.12px" width="13" height="15" viewBox="0 0 13 15"><circle cx="6.5" cy="4.2" r="2.2" fill="none" stroke="#808080" stroke-width="1"/><circle cx="6.5" cy="4.2" r="3" fill="none" stroke="#808080" stroke-width="1" stroke-dasharray="1.1 1.25"/><path d="M3.9 7.6 L1.2 12.6 C0.9 13.2 1.2 13.6 1.9 13.6 H11.1 C11.8 13.6 12.1 13.2 11.8 12.6 L9.1 7.6" fill="none" stroke="#808080" stroke-width="1.2" stroke-linejoin="round"/><path d="M6.5 7.4 V10.2 M6.5 11.1 V12" stroke="#808080" stroke-width="1"/></svg>
<!-- /TABLE -->
</body></html>
